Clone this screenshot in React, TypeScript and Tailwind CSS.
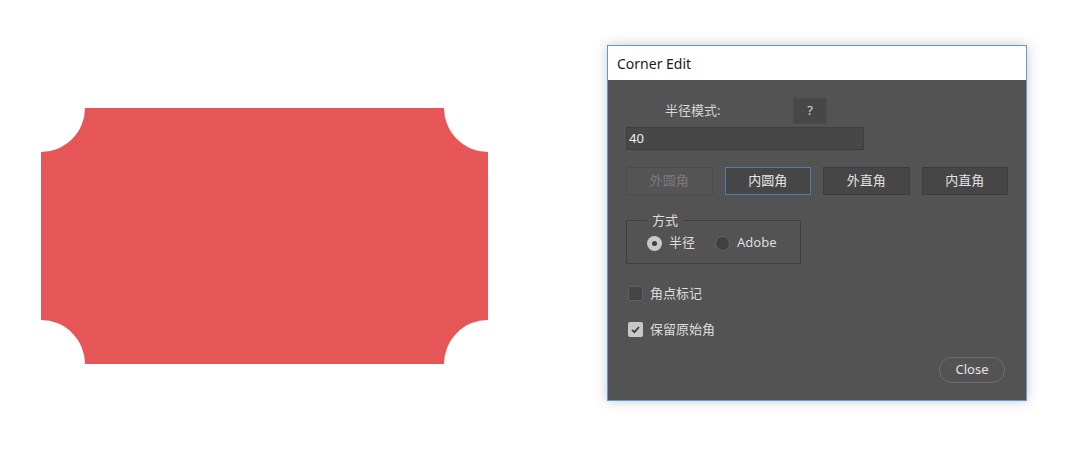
import React from 'react';

const font = "font-['Noto_Sans','Noto_Sans_CJK_SC',sans-serif]";

const CornerShape: React.FC = () => (
  <svg width="447" height="256" viewBox="0 0 447 256" className="shrink-0">
    <path
      d="M44 0 H403 A44 44 0 0 0 447 44 V212 A44 44 0 0 0 403 256 H44 A44 44 0 0 0 0 212 V44 A44 44 0 0 0 44 0 Z"
      fill="#e65656"
    />
  </svg>
);

const ModeButton: React.FC<{ label: string; state: 'disabled' | 'active' | 'normal' }> = ({ label, state }) => {
  const cls =
    state === 'disabled'
      ? 'bg-[#555555] border-[#4b4b4b] text-[#7a7a7a]'
      : state === 'active'
      ? 'bg-[#464646] border-[#4f7cb8] text-[#e8e8e8]'
      : 'bg-[#464646] border-[#3d3d3d] text-[#e2e2e2]';
  return (
    <div className={`w-[87px] h-[28px] flex items-center justify-center border text-[13px] ${cls}`}>
      {label}
    </div>
  );
};

const App: React.FC = () => {
  return (
    <div className={`w-[1080px] h-[469px] bg-white flex items-start overflow-hidden ${font}`}>
      <div className="ml-[41px] mt-[108px]">
        <CornerShape />
      </div>

      {/* dialog */}
      <div className="ml-[119px] mt-[45px] w-[420px] h-[356px] border border-[#5a9bd8] shadow-[0_0_12px_rgba(0,0,0,0.22)] flex flex-col">
        <div className="h-[34px] bg-white flex items-center pl-[9px] text-[14px] text-[#1a1a1a]">
          Corner Edit
        </div>

        <div className="flex-1 bg-[#535353] pt-[18px] px-[18px] flex flex-col text-[13px] text-[#dedede]">
          <div className="flex items-center h-[26px]">
            <div className="w-[167px] pl-[39px] text-[#d6d6d6]">半径模式:</div>
            <div className="w-[34px] h-[26px] bg-[#474747] border border-[#4c4c4c] flex items-center justify-center text-[#d8d8d8]">
              ?
            </div>
          </div>

          <div className="mt-[3px] w-[238px] h-[23px] bg-[#474747] border border-[#3e3e3e] flex items-center pl-[2px] text-[#f0f0f0]">
            40
          </div>

          <div className="mt-[17px] flex gap-[12px]">
            <ModeButton label="外圆角" state="disabled" />
            <ModeButton label="内圆角" state="active" />
            <ModeButton label="外直角" state="normal" />
            <ModeButton label="内直角" state="normal" />
          </div>

          <div className="relative mt-[25px] w-[175px] h-[44px] border border-[#404040]">
            <span className="absolute left-[20px] -top-[10px] px-[5px] bg-[#535353] leading-[18px]">方式</span>
            <div className="flex items-center h-full pt-[2px] pl-[20px]">
              <span className="w-[15px] h-[15px] rounded-full bg-[#c8c8c8] flex items-center justify-center">
                <span className="w-[5px] h-[5px] rounded-full bg-[#3f3f3f]" />
              </span>
              <span className="ml-[7px]">半径</span>
              <span className="ml-[20px] w-[15px] h-[15px] rounded-full bg-[#404040] border border-[#666666]" />
              <span className="ml-[7px]">Adobe</span>
            </div>
          </div>

          <div className="mt-[22px] ml-[2px] flex items-center h-[15px]">
            <span className="w-[15px] h-[15px] rounded-[2px] bg-[#454545] border border-[#616161]" />
            <span className="ml-[7px]">角点标记</span>
          </div>

          <div className="mt-[21px] ml-[2px] flex items-center h-[15px]">
            <span className="w-[15px] h-[15px] rounded-[2px] bg-[#c8c8c8] flex items-center justify-center">
              <svg width="11" height="11" viewBox="0 0 11 11">
                <path d="M2 5.8 L4.4 8.2 L9 3" fill="none" stroke="#3c3c3c" strokeWidth="1.8" />
              </svg>
            </span>
            <span className="ml-[7px]">保留原始角</span>
          </div>

          <div className="mt-[20px] self-end mr-[3px] w-[66px] h-[26px] rounded-full border border-[#6e6e6e] flex items-center justify-center text-[#e4e4e4]">
            Close
          </div>
        </div>
      </div>
    </div>
  );
};

export default App;
